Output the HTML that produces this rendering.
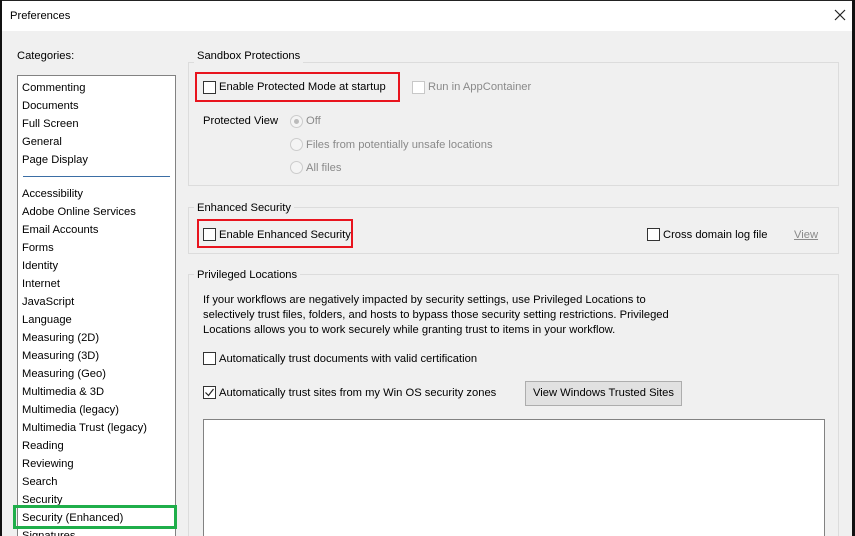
<!DOCTYPE html>
<html style="width:855px;height:536px;overflow:hidden"><head><style>
*{margin:0;padding:0;box-sizing:border-box}
body{width:855px;height:536px;overflow:hidden;background:#f0f0f0;font-family:"Liberation Sans",sans-serif;font-size:11.2px;color:#000;position:relative}
.a{position:absolute;white-space:nowrap;line-height:14px}
.box{position:absolute}
.cb{position:absolute;width:13px;height:13px;border:1px solid #333;background:#fff}
.rd{position:absolute;width:13px;height:13px;border:1px solid #ccc;border-radius:50%;background:#f4f4f4}
.grp{position:absolute;border:1px solid #dcdcdc}
.lbl{position:absolute;background:#f0f0f0;padding:0 3px;line-height:14px}
.g{color:#8a8a8a}
</style></head><body>
<div class="box" style="left:0;top:0;width:855px;height:31px;background:#fff"></div>
<div class="box" style="left:0;top:0;width:855px;height:1px;background:#222"></div>
<div class="box" style="left:0;top:0;width:2px;height:536px;background:#111"></div>
<div class="box" style="left:852px;top:0;width:3px;height:536px;background:#111"></div>
<div class="a" style="left:10px;top:9px">Preferences</div>
<svg class="box" style="left:834px;top:9px" width="12" height="12"><path d="M1 1L11 11M11 1L1 11" stroke="#222" stroke-width="1.2"/></svg>

<div class="a" style="left:17px;top:49px">Categories:</div>
<div class="box" style="left:17px;top:75px;width:159px;height:461px;background:#fff;border:1px solid #828282;border-bottom:none"></div>
<div class="box" style="left:23px;top:176px;width:147px;height:1px;background:#3b6ea5"></div>
<div class="a" style="left:22px;top:79px;line-height:18px">Commenting<br>Documents<br>Full Screen<br>General<br>Page Display</div>
<div class="a" style="left:22px;top:185px;line-height:18px">Accessibility<br>Adobe Online Services<br>Email Accounts<br>Forms<br>Identity<br>Internet<br>JavaScript<br>Language<br>Measuring (2D)<br>Measuring (3D)<br>Measuring (Geo)<br>Multimedia &amp; 3D<br>Multimedia (legacy)<br>Multimedia Trust (legacy)<br>Reading<br>Reviewing<br>Search<br>Security<br>Security (Enhanced)<br>Signatures</div>
<div class="box" style="left:13px;top:505px;width:164px;height:24px;border:3px solid #1fae4a"></div>

<div class="grp" style="left:188px;top:62px;width:651px;height:124px"></div>
<div class="lbl" style="left:194px;top:49px">Sandbox Protections</div>
<div class="box" style="left:195px;top:72px;width:205px;height:30px;border:2px solid #e8141e"></div>
<div class="cb" style="left:203px;top:81px"></div>
<div class="a" style="left:219px;top:80px">Enable Protected Mode at startup</div>
<div class="cb" style="left:412px;top:81px;border-color:#c8c8c8"></div>
<div class="a g" style="left:428px;top:80px">Run in AppContainer</div>
<div class="a" style="left:203px;top:114px">Protected View</div>
<div class="rd" style="left:290px;top:115px"></div><div class="box" style="left:294px;top:119px;width:5px;height:5px;border-radius:50%;background:#bbb"></div>
<div class="a g" style="left:306px;top:114px">Off</div>
<div class="rd" style="left:290px;top:138px"></div><div class="a g" style="left:306px;top:138px">Files from potentially unsafe locations</div>
<div class="rd" style="left:290px;top:161px"></div><div class="a g" style="left:306px;top:161px">All files</div>

<div class="grp" style="left:188px;top:207px;width:651px;height:47px"></div>
<div class="lbl" style="left:194px;top:201px">Enhanced Security</div>
<div class="box" style="left:197px;top:219px;width:156px;height:29px;border:2px solid #e8141e"></div>
<div class="cb" style="left:203px;top:228px"></div>
<div class="a" style="left:219px;top:228px">Enable Enhanced Security</div>
<div class="cb" style="left:647px;top:228px"></div>
<div class="a" style="left:663px;top:228px">Cross domain log file</div>
<div class="a g" style="left:794px;top:228px;text-decoration:underline">View</div>

<div class="grp" style="left:188px;top:274px;width:651px;height:262px;border-bottom:none"></div>
<div class="lbl" style="left:194px;top:268px">Privileged Locations</div>
<div class="a" style="left:203px;top:293px;line-height:15px">If your workflows are negatively impacted by security settings, use Privileged Locations to<br>selectively trust files, folders, and hosts to bypass those security setting restrictions. Privileged<br>Locations allows you to work securely while granting trust to items in your workflow.</div>
<div class="cb" style="left:203px;top:352px"></div>
<div class="a" style="left:219px;top:352px">Automatically trust documents with valid certification</div>
<div class="cb" style="left:203px;top:386px"></div>
<svg class="box" style="left:203px;top:386px" width="13" height="13"><path d="M2.5 6.5L5.5 9.5L10.5 3" stroke="#222" stroke-width="1.2" fill="none"/></svg>
<div class="a" style="left:219px;top:386px">Automatically trust sites from my Win OS security zones</div>
<div class="box" style="left:525px;top:381px;width:157px;height:25px;background:#e1e1e1;border:1px solid #adadad;text-align:center;line-height:23px">View Windows Trusted Sites</div>
<div class="box" style="left:203px;top:419px;width:622px;height:117px;background:#fff;border:1px solid #828282;border-bottom:none"></div>
</body></html>
